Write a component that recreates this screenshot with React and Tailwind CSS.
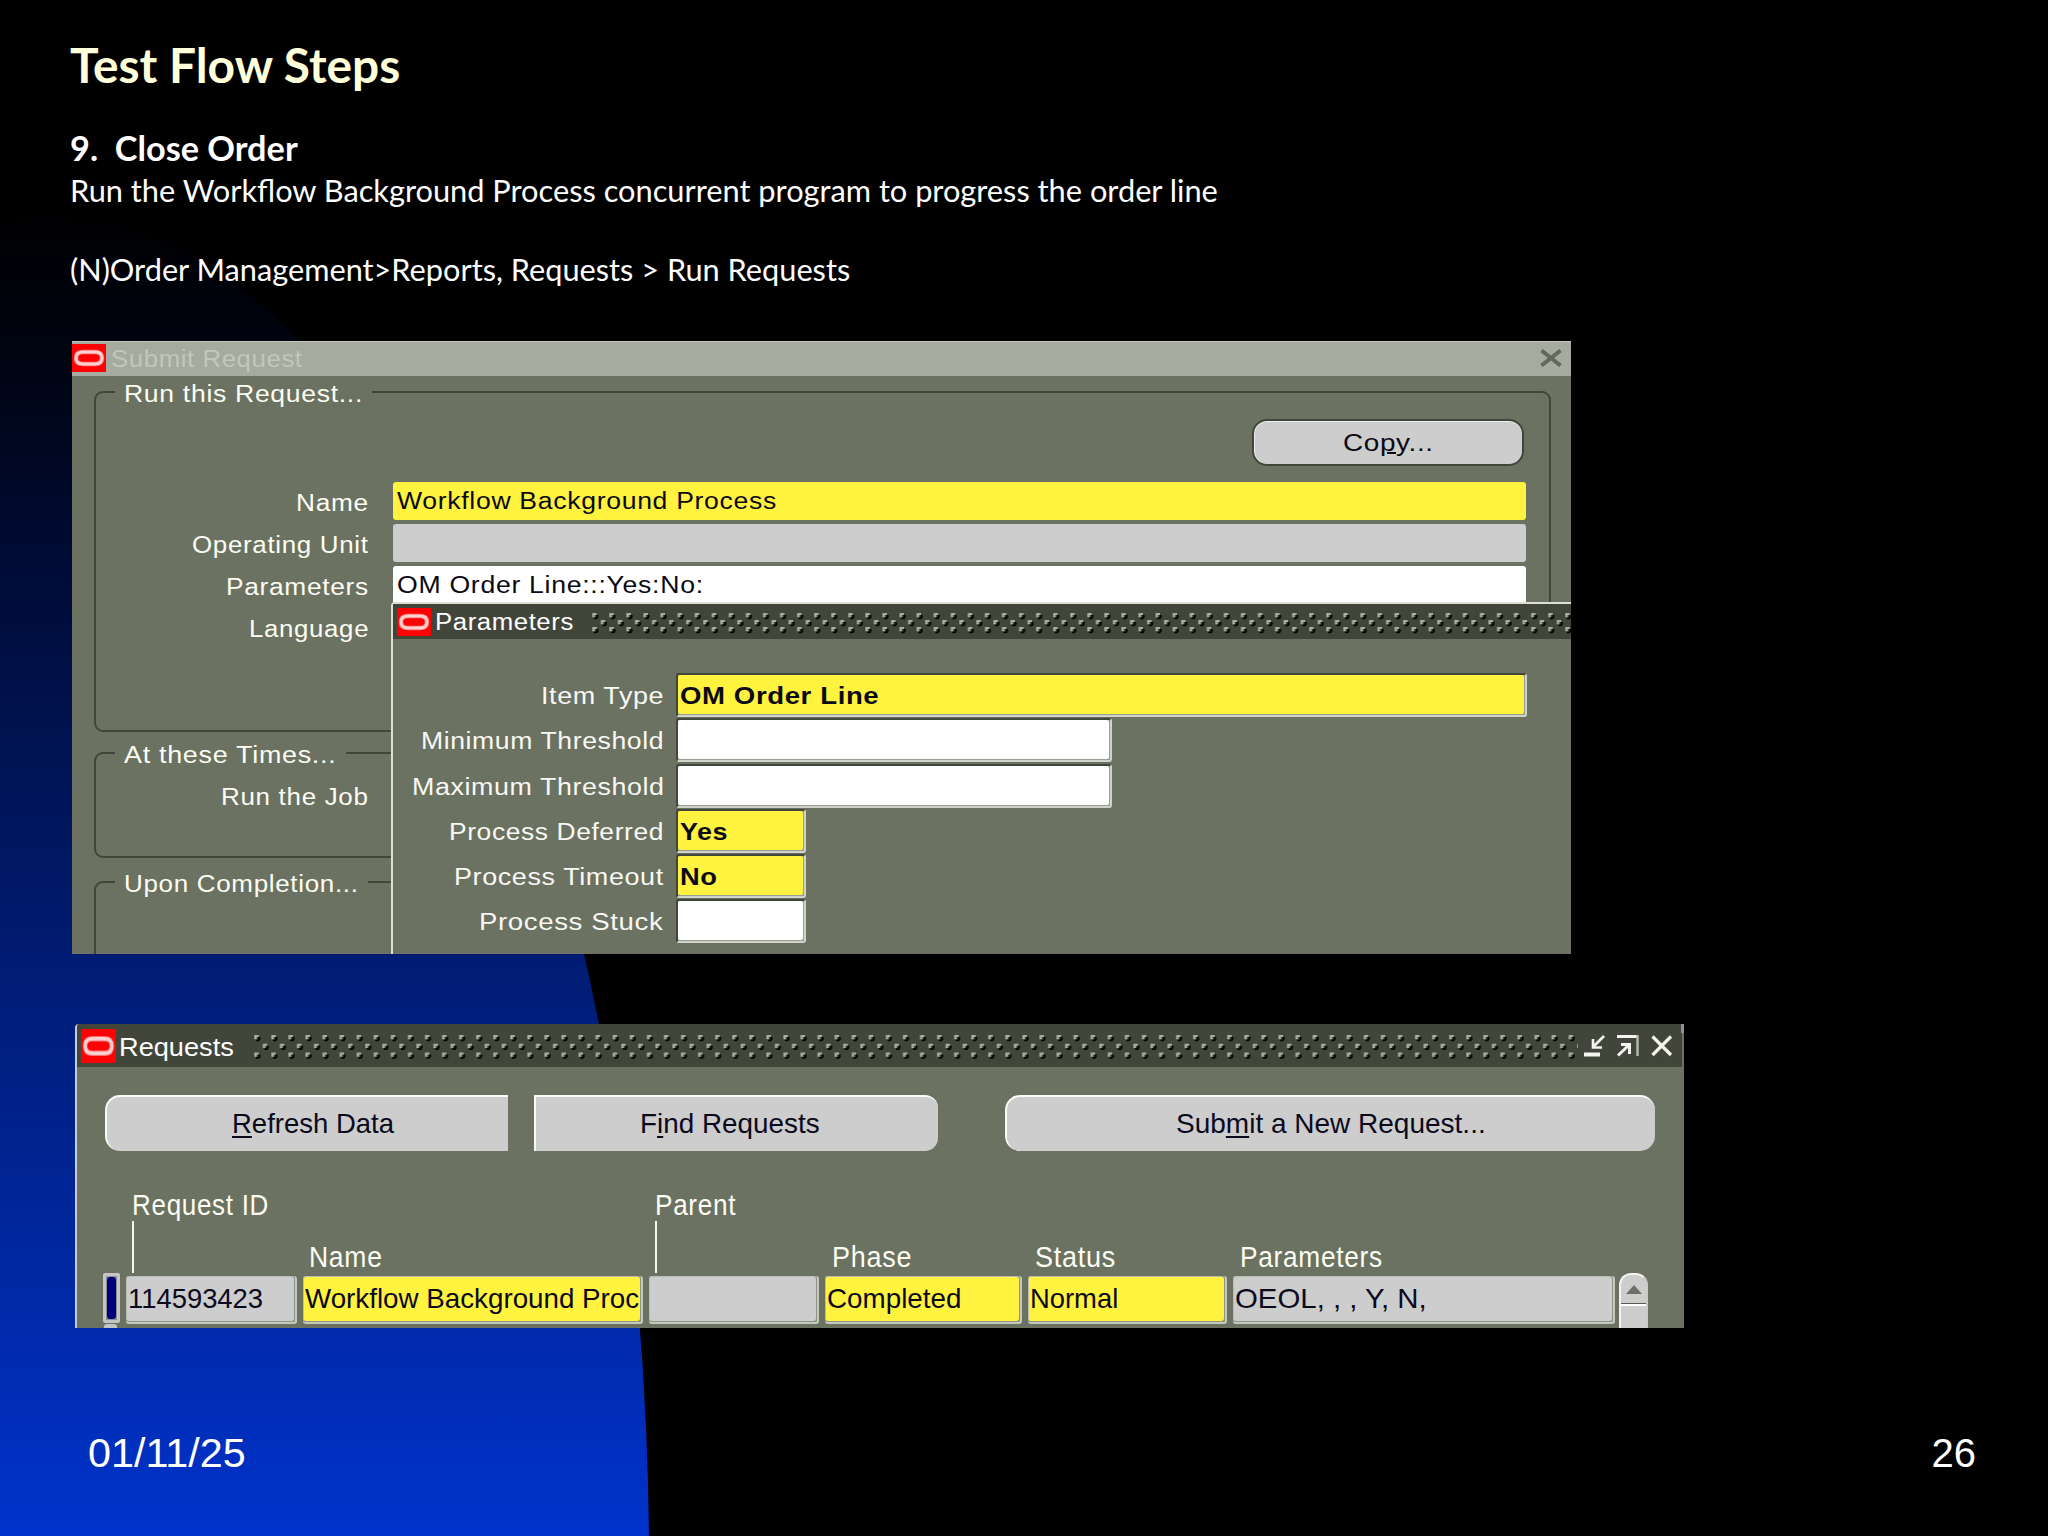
import React, { useState, useRef, useLayoutEffect } from 'react';

// One line of text, fitted to a given width
function Fit({ w, className = '', children }) {
    const ref = useRef(null);
    const [scale, setScale] = useState(1);

    useLayoutEffect(() => {
        if (ref.current) {
            setScale(w / ref.current.offsetWidth);
        }
    }, [w]);

    return (
        <span className={`block shrink-0 ${className}`} style={{ width: w }}>
            <span ref={ref} className="inline-block origin-left whitespace-pre align-top" style={{ transform: `scaleX(${scale})` }}>
                {children}
            </span>
        </span>
    );
}

function OracleIcon({ className }) {
    return (
        <svg className={`block shrink-0 ${className}`} viewBox="0 0 34 28" preserveAspectRatio="none">
            <rect width="34" height="28" fill="#fd0202" />
            <path d="M11 8H23Q30 8 30 14T23 20H11Q4 20 4 14T11 8z" fill="none" stroke="#fd7070" strokeWidth="4.6" />
            <path d="M11 8H23Q30 8 30 14T23 20H11Q4 20 4 14T11 8z" fill="none" stroke="#ffd0d0" strokeWidth="2.8" />
        </svg>
    );
}

function Dots({ id, className, rowGap }) {
    const pitch = 17.07;
    const rows = [
        [0, 0],
        [pitch / 2, rowGap],
        [0, rowGap * 2],
    ];
    return (
        <svg className={`block ${className}`}>
            <defs>
                <pattern id={id} width={pitch} height="60" patternUnits="userSpaceOnUse">
                    {rows.map(([x, y]) => (
                        <g key={y}>
                            <path d={`M${x + 1.8} ${y + 4.4}h2.4v-2.4h2.2v2.4l-1.4 1.8h-3.2z`} fill="#050604" />
                            <path d={`M${x + 0.3} ${y}h4.4v2h-2v2.2h-2.4z`} fill="#a9aea2" />
                        </g>
                    ))}
                </pattern>
            </defs>
            <rect width="100%" height="100%" fill={`url(#${id})`} />
        </svg>
    );
}

function Backdrop() {
    return (
        <svg className="absolute left-0 top-0 h-[1536px] w-[700px]" viewBox="0 0 700 1536">
            <defs>
                <linearGradient id="blue" gradientUnits="userSpaceOnUse" x1="0" y1="200" x2="0" y2="1536">
                    <stop offset="0" stopColor="#000000" />
                    <stop offset="0.12" stopColor="#000412" />
                    <stop offset="0.26" stopColor="#000b33" />
                    <stop offset="0.58" stopColor="#001c75" />
                    <stop offset="1" stopColor="#0033cc" />
                </linearGradient>
            </defs>
            <ellipse cx="45" cy="1560" rx="604" ry="1344" fill="url(#blue)" />
        </svg>
    );
}

const legends = 'ml-[19px] h-[22px] px-[9px] text-[#fdfdf4]';

function Group({ title, w, className, children }) {
    return (
        <fieldset className={`ml-[22px] rounded-[9px] border-2 border-[#41463a] ${className}`}>
            <legend className={legends}>
                <Fit w={w} className="pt-[2px]">{title}</Fit>
            </legend>
            {children}
        </fieldset>
    );
}

function Row({ label, w, className = '', children }) {
    return (
        <div className="flex h-[38px] leading-[38px]">
            <div className="flex w-[273px] justify-end pt-[2px] text-[#fdfdf4]">
                <Fit w={w}>{label}</Fit>
            </div>
            {className && <div className={`ml-[24px] w-[1133px] rounded-[3px] pl-[4px] text-[#0b0a14] ${className}`}>{children}</div>}
        </div>
    );
}

const params = [
    { label: 'Item Type', w: 123, box: 'w-[851px]', fill: 'bg-[#fff33f]', value: 'OM Order Line', vw: 199 },
    { label: 'Minimum Threshold', w: 243, box: 'w-[436px]', fill: 'bg-white' },
    { label: 'Maximum Threshold', w: 252, box: 'w-[436px]', fill: 'bg-white' },
    { label: 'Process Deferred', w: 215, box: 'w-[130px]', fill: 'bg-[#fff33f]', value: 'Yes', vw: 48 },
    { label: 'Process Timeout', w: 210, box: 'w-[130px]', fill: 'bg-[#fff33f]', value: 'No', vw: 38 },
    { label: 'Process Stuck', w: 185, box: 'w-[130px]', fill: 'bg-white' },
];

function ParametersWindow() {
    return (
        <div className="absolute bottom-0 left-[319px] right-0 top-[261px] rounded-tl-[4px] border-l-2 border-t-2 border-[#dcdfd2] bg-[#6b7261]">
            <div className="flex h-[35px] items-start bg-[#42463a] pl-[4px] pt-[4px]">
                <OracleIcon className="h-[28px] w-[34px]" />
                <Fit w={139} className="ml-[4px] leading-[29px] tracking-[0.5px] text-white">Parameters</Fit>
                <Dots id="dotsParams" className="ml-[18px] mt-[5px] h-[22px] flex-1" rowGap={7} />
            </div>
            <div className="mt-[34px] flex flex-col gap-[1.3px] tracking-[0.5px]">
                {params.map((p) => (
                    <div key={p.label} className="flex h-[44px] leading-[44px]">
                        <div className="flex w-[271px] justify-end pt-px text-[#f8f8f4]">
                            <Fit w={p.w}>{p.label}</Fit>
                        </div>
                        <div className={`ml-[12px] flex rounded-[3px] border-2 border-b-[#d0d3ca] border-l-[#41463a] border-r-[#d0d3ca] border-t-[#41463a] bg-[#9a9e91] pb-px pr-px ${p.box}`}>
                            <div className={`flex-1 rounded-[2px] pl-[2px] font-bold leading-[42px] text-[#0b0a14] ${p.fill}`}>
                                {p.value && <Fit w={p.vw}>{p.value}</Fit>}
                            </div>
                        </div>
                    </div>
                ))}
            </div>
        </div>
    );
}

function SubmitRequestWindow() {
    return (
        <div className="relative mt-[52px] h-[613px] w-[1499px] overflow-hidden bg-[#6b7261] font-['Liberation_Sans',Arial,sans-serif] text-[23px] leading-[22px]">
            <div className="flex h-[35px] border-t border-[#c3c7bc] bg-[#a5ab9e] pt-[2px]">
                <OracleIcon className="h-[28px] w-[34px]" />
                <Fit w={192} className="ml-[5px] leading-[30px] tracking-[0.5px] text-[#c2c6bc]">Submit Request</Fit>
                <svg className="ml-auto mr-[9px] mt-[5px] h-[18px] w-[22px]" viewBox="0 0 22 18">
                    <path d="M1.5 1.5L20.5 16.5M20.5 1.5L1.5 16.5" stroke="#626959" strokeWidth="4" />
                </svg>
            </div>
            <Group title="Run this Request..." w={239} className="mt-[5px] h-[351px] w-[1457px] tracking-[0.6px]">
                <div className="ml-auto mr-[25px] mt-[16px] flex h-[47px] w-[272px] items-center justify-center rounded-[15px] border-2 border-[#41463a] bg-[#cdcdcd] tracking-[0.5px] text-[#0b0a14] shadow-[inset_0_1px_0_#eeeeee,inset_1px_0_0_#eeeeee]">
                    <Fit w={91}>Co<span className="underline decoration-2 underline-offset-[1px]">p</span>y...</Fit>
                </div>
                <div className="mt-[16px] flex flex-col gap-[4px]">
                    <Row label="Name" w={73} className="bg-[#fff33f]"><Fit w={380}>Workflow Background Process</Fit></Row>
                    <Row label="Operating Unit" w={177} className="bg-[#cdcdcd]" />
                    <Row label="Parameters" w={143} className="bg-white"><Fit w={307}>OM Order Line:::Yes:No:</Fit></Row>
                    <Row label="Language" w={120} />
                </div>
            </Group>
            <Group title="At these Times..." w={213} className="mt-[10px] h-[116px] w-[1457px] tracking-[0.6px]">
                <div className="mt-[12px]">
                    <Row label="Run the Job" w={148} />
                </div>
            </Group>
            <Group title="Upon Completion..." w={235} className="mt-[13px] h-[116px] w-[1457px] tracking-[0.6px]" />
            <ParametersWindow />
        </div>
    );
}

function Column({ label, w, top, className, pad, fill, children }) {
    return (
        <div className={`flex shrink-0 flex-col ${className}`}>
            <div className={`flex h-[125px] flex-col justify-end pb-[3px] tracking-[0.8px] text-[#fdfdf4] ${pad}`}>
                <Fit w={w} className="leading-[32px]">{label}</Fit>
                {top && <div className="h-[52px] w-[2px] bg-[#f4f5ec]" />}
            </div>
            <div className="flex h-[48px] rounded-[3px] border-b-2 border-r-2 border-[#c6cabd] bg-[#8f9486] pb-[1.5px] pr-[1.5px]">
                <div className={`flex-1 rounded-[3px] border-l border-t border-[#b9bcae] pl-px text-[28px] leading-[44px] text-[#0b0a1c] ${fill}`}>
                    {children}
                </div>
            </div>
        </div>
    );
}

function RequestsWindow() {
    const button = 'flex h-[56px] items-center justify-center border-t-2 border-[#fafafa] bg-[#cdcdcd] text-[28px] leading-[34px] text-[#0b0a1c]';
    return (
        <div className="relative ml-[3px] mt-[70px] h-[304px] w-[1609px] overflow-hidden rounded-tl-[4px] border-l-2 border-[#c8ccd4] bg-[#6b7261] font-['Liberation_Sans',Arial,sans-serif] text-[29px]">
            <div className="mr-[2px] flex h-[43px] items-start bg-[#42463a] pl-[4px] pt-[5px] text-[26px]">
                <OracleIcon className="h-[34px] w-[35px]" />
                <Fit w={115} className="ml-[3px] leading-[36px] text-white">Requests</Fit>
                <Dots id="dotsRequests" className="ml-[20px] mt-[6px] h-[26px] w-[1324px]" rowGap={8.8} />
                <svg className="ml-[5px] mt-[5px] h-[24px] w-[92px]" viewBox="0 0 92 24" fill="none" stroke="#f4f5ee">
                    <path d="M1 20.5H17" strokeWidth="4" />
                    <path d="M21 2L11 12" strokeWidth="2.6" />
                    <path d="M10 5V13.5H19" strokeWidth="2.6" />
                    <path d="M34 2.5H54.5" strokeWidth="3" />
                    <path d="M54.5 1V22" stroke="#b9bdb1" strokeWidth="2.4" />
                    <path d="M35 21.5L46 11" strokeWidth="3" />
                    <path d="M38 10.5H46.5V20" strokeWidth="3" />
                    <path d="M69.5 2.5L88 21M88 2.5L69.5 21" strokeWidth="3.2" />
                </svg>
            </div>
            <div className="absolute right-0 top-0 h-[9px] w-[3px] bg-[#8f9298]" />
            <div className="mt-[28px] flex pl-[28px]">
                <div className={`w-[403px] rounded-l-[15px] border-l-2 ${button}`}>
                    <Fit w={162} className="ml-[10px]"><span className="underline decoration-2 underline-offset-[3px]">R</span>efresh Data</Fit>
                </div>
                <div className={`ml-[26px] w-[404px] rounded-r-[13px] border-l-2 ${button}`}>
                    <Fit w={180} className="-ml-[15px]">F<span className="underline decoration-2 underline-offset-[3px]">i</span>nd Requests</Fit>
                </div>
                <div className={`ml-[67px] w-[650px] rounded-[15px] border-l-2 ${button}`}>
                    <Fit w={310}>Sub<span className="underline decoration-2 underline-offset-[3px]">m</span>it a New Request...</Fit>
                </div>
            </div>
            <div className="flex gap-[6px] pl-[26px]">
                <div className="mt-[122px] w-[17px] shrink-0">
                    <div className="h-[50px] rounded-[2px] border-[3px] border-[#c3c6c4] bg-[#8c908a] p-px">
                        <div className="h-full rounded-[3px] bg-[#00007e]" />
                    </div>
                    <div className="ml-px mt-px h-[6px] w-[13px] rounded-t-[3px] bg-[#c3c6c4]" />
                </div>
                <Column label="Request ID" w={137} top className="w-[171px]" pad="pl-[6px]" fill="bg-[#cdcdcd]">
                    <Fit w={135}>114593423</Fit>
                </Column>
                <Column label="Name" w={74} className="w-[340px]" pad="pl-[6px]" fill="bg-[#fff33f]">
                    <Fit w={334}>Workflow Background Proc</Fit>
                </Column>
                <Column label="Parent" w={81} top className="w-[170px]" pad="pl-[6px]" fill="bg-[#cdcdcd]" />
                <Column label="Phase" w={80} className="w-[197px]" pad="pl-[7px]" fill="bg-[#fff33f]">
                    <Fit w={134}>Completed</Fit>
                </Column>
                <Column label="Status" w={81} className="w-[199px]" pad="pl-[7px]" fill="bg-[#fff33f]">
                    <Fit w={88}>Normal</Fit>
                </Column>
                <Column label="Parameters" w={143} className="w-[382px]" pad="pl-[7px]" fill="bg-[#cdcdcd]">
                    <Fit w={192}>OEOL, , , Y, N,</Fit>
                </Column>
                <div className="-ml-[2px] mt-[122px] h-[56px] w-[29px] shrink-0 rounded-t-[12px] border-x-2 border-t-2 border-[#f2f2ee] border-r-[#c9ccc3] bg-[#cdcdcd]">
                    <svg className="mx-auto mt-[10px] h-[9px] w-[16px]" viewBox="0 0 16 9">
                        <path d="M8 0L16 9H0z" fill="#6b7068" />
                    </svg>
                    <div className="mt-[9px] h-[3px] border-b-2 border-t border-b-white border-t-[#55594f]" />
                </div>
            </div>
        </div>
    );
}

export default function App() {
    return (
        <div className="relative h-[1536px] w-[2048px] overflow-hidden bg-black">
            <Backdrop />
            <div className="relative pl-[72px] pt-[36px]">
                <div className="-ml-[2px] font-[Lato,sans-serif] text-white">
                    <h1 className="text-[48px] font-bold leading-[57px] text-[#ffffd9]"><Fit w={330}>Test Flow Steps</Fit></h1>
                    <h2 className="mt-[35px] text-[34px] font-bold leading-[39px]"><Fit w={228}>9.  Close Order</Fit></h2>
                    <p className="mt-[3px] text-[30px] leading-[40px]"><Fit w={1148}>Run the Workflow Background Process concurrent program to progress the order line</Fit></p>
                    <p className="mt-[39px] text-[30px] leading-[40px]"><Fit w={780}>(N)Order Management&gt;Reports, Requests &gt; Run Requests</Fit></p>
                </div>
                <SubmitRequestWindow />
                <RequestsWindow />
                <div className="mt-[101px] flex justify-between pl-[16px] pr-[72px] font-['Liberation_Sans',Arial,sans-serif] text-[40px] leading-[48px] text-white">
                    <Fit w={158}>01/11/25</Fit>
                    <span>26</span>
                </div>
            </div>
        </div>
    );
}
